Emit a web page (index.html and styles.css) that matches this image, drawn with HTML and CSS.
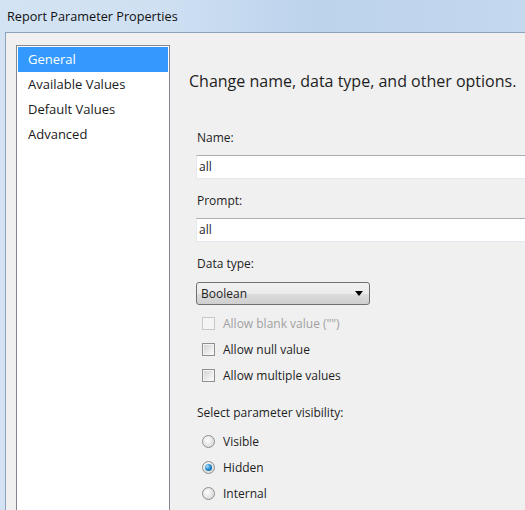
FILE: index.html
```html
<!DOCTYPE html>
<html>
<head>
<meta charset="utf-8">
<link rel="stylesheet" href="styles.css">
</head>
<body>
<div class="titlebar">Report Parameter Properties</div>
<div class="window">
  <div class="sidebar">
    <div class="item selected">General</div>
    <div class="item">Available Values</div>
    <div class="item">Default Values</div>
    <div class="item">Advanced</div>
  </div>
  <div class="main">
    <div class="heading">Change name, data type, and other options.</div>
    <div class="label first">Name:</div>
    <div class="textbox">all</div>
    <div class="label">Prompt:</div>
    <div class="textbox">all</div>
    <div class="label">Data type:</div>
    <div class="dropdown"><span>Boolean</span><span class="arrow"></span></div>
    <div class="checks">
      <div class="row disabled"><span class="check"></span><span>Allow blank value ("")</span></div>
      <div class="row"><span class="check"></span><span>Allow null value</span></div>
      <div class="row"><span class="check"></span><span>Allow multiple values</span></div>
    </div>
    <div class="label vis">Select parameter visibility:</div>
    <div class="radios">
      <div class="row"><span class="radio"></span><span>Visible</span></div>
      <div class="row"><span class="radio on"></span><span>Hidden</span></div>
      <div class="row"><span class="radio"></span><span>Internal</span></div>
    </div>
  </div>
</div>
</body>
</html>
```
FILE: styles.css
```css
html, body {
  margin: 0;
  padding: 0;
}
body {
  width: 525px;
  height: 510px;
  overflow: hidden;
  font-family: "Open Sans", "Noto Sans", sans-serif;
  font-size: 12px;
  color: #1e1e1e;
  background: linear-gradient(90deg, #d3e3f3 0%, #cfe0f2 30%, #bcd3ec 60%, #c4d8ee 100%);
  display: flex;
  flex-direction: column;
}
.titlebar {
  height: 32px;
  line-height: 32px;
  padding-left: 7px;
  font-size: 12.7px;
  color: #111;
  box-sizing: border-box;
}
.window {
  flex: 1;
  margin-left: 5px;
  border-left: 1px solid #8da2bb;
  border-top: 1px solid #8da2bb;
  background: #f0f0f0;
  display: flex;
  min-height: 0;
}
.sidebar {
  margin: 12px 0 0 10px;
  width: 154px;
  box-sizing: border-box;
  border: 1px solid #828790;
  border-bottom: none;
  background: #fff;
  padding: 1px;
}
.item {
  height: 25px;
  line-height: 25px;
  padding-left: 10px;
  font-size: 13px;
  color: #1a1a1a;
}
.item.selected {
  background: #3399ff;
  color: #fff;
}
.main {
  flex: 1;
  padding: 37px 0 0 19px;
  display: flex;
  flex-direction: column;
  min-width: 0;
}
.heading {
  font-size: 16px;
  line-height: 22px;
  color: #1e1e1e;
  white-space: nowrap;
}
.label {
  line-height: 16px;
  margin: 14px 0 0 8px;
  white-space: nowrap;
}
.label.first {
  margin-top: 38px;
}
.textbox {
  margin: 9px 0 0 7px;
  height: 24px;
  box-sizing: border-box;
  border: 1px solid #e3e9ef;
  border-top-color: #abadb3;
  border-right: none;
  background: #fff;
  line-height: 22px;
  padding-left: 2px;
  width: 340px;
}
.dropdown {
  margin: 10px 0 0 7px;
  width: 174px;
  height: 23px;
  box-sizing: border-box;
  border: 1px solid #707070;
  border-radius: 3px;
  background: linear-gradient(#f2f2f2 0%, #ebebeb 50%, #dddddd 51%, #cfcfcf 100%);
  display: flex;
  align-items: center;
  justify-content: space-between;
  padding: 0 6px 0 4px;
}
.arrow {
  width: 0;
  height: 0;
  border-left: 4.5px solid transparent;
  border-right: 4.5px solid transparent;
  border-top: 5px solid #000;
}
.checks {
  margin-top: 5px;
}
.row {
  height: 26px;
  display: flex;
  align-items: center;
  padding-left: 13px;
  gap: 8px;
  white-space: nowrap;
}
.row.disabled {
  color: #a0a0a0;
}
.check {
  width: 13px;
  height: 13px;
  box-sizing: border-box;
  border: 1px solid #8e8f8f;
  background: linear-gradient(135deg, #cfcfcf 0%, #ececec 60%, #ffffff 100%);
  box-shadow: inset 0 0 0 1px #f4f4f4;
}
.disabled .check {
  border-color: #c8c8c8;
  background: #f4f4f4;
  box-shadow: none;
}
.label.vis {
  margin-top: 17px;
}
.radios {
  margin-top: 7px;
}
.radio {
  width: 13px;
  height: 13px;
  box-sizing: border-box;
  border-radius: 50%;
  border: 1px solid #8e8f8f;
  background: radial-gradient(circle at 40% 40%, #ffffff 0%, #e6e6e6 50%, #d0d0d0 100%);
  position: relative;
}
.radio.on::after {
  content: "";
  position: absolute;
  left: 2px;
  top: 2px;
  width: 7px;
  height: 7px;
  border-radius: 50%;
  background: radial-gradient(circle at 35% 35%, #a8e2ff 0%, #1f87c9 50%, #0b4f86 100%);
}
```
